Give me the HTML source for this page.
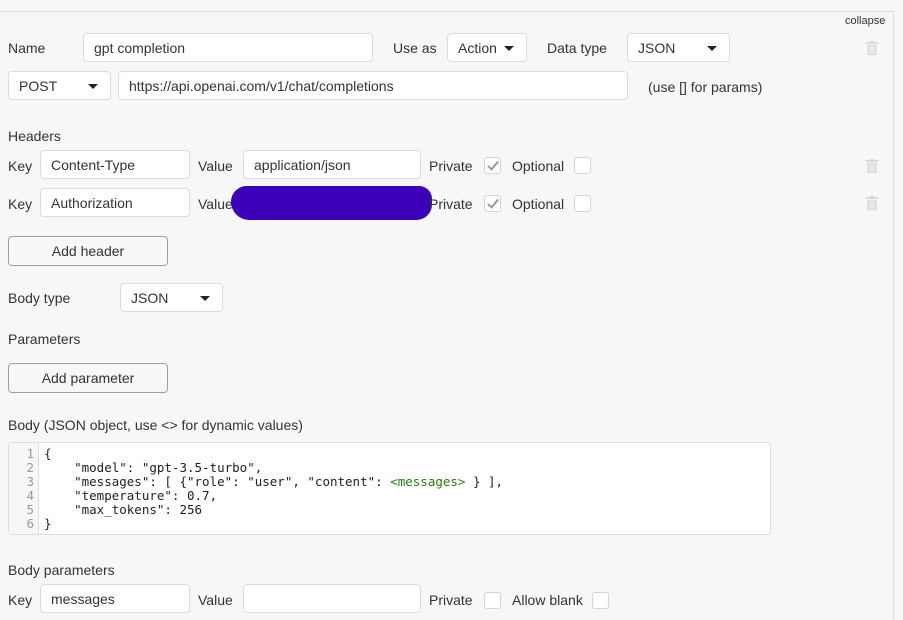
<!DOCTYPE html>
<html><head><meta charset="utf-8"><style>
*{box-sizing:border-box;margin:0;padding:0}
body{width:903px;height:620px;background:#f7f7f7;font-family:"Liberation Sans",sans-serif;font-size:14px;color:#333;position:relative;overflow:hidden}
.a{position:absolute}
.l{position:absolute;line-height:18px}
.in{position:absolute;background:#fff;border:1px solid #dcdcdc;border-radius:4px;height:29px;line-height:29px;padding-left:10px;color:#333}
.dd::after{content:"";position:absolute;right:12px;top:12px;border-left:5px solid transparent;border-right:5px solid transparent;border-top:5px solid #222}
.cb{position:absolute;width:17px;height:17px;background:#fff;border:1px solid #d4d4d4;border-radius:3px}
.ck::after{content:"";position:absolute;left:5px;top:1px;width:4px;height:9px;border:solid #9a9a9a;border-width:0 2.5px 2.5px 0;transform:rotate(40deg)}
.btn{position:absolute;border:1px solid #a0a0a0;border-radius:4px;height:30px;width:160px;text-align:center;line-height:28px;color:#333}
.tr{position:absolute;width:12px;height:14px}
.code{position:absolute;left:8px;top:442px;width:763px;height:93px;background:#fff;border:1px solid #dcdcdc;border-radius:4px;font-family:"DejaVu Sans Mono","Liberation Mono",monospace;font-size:12.5px;line-height:14px}
.gut{position:absolute;left:0;top:0;width:30px;height:91px;background:#f7f7f7;border-right:1px solid #ddd;color:#999;text-align:right;padding:4px 4px 0 0}
.txt{position:absolute;left:35px;top:4px;white-space:pre;color:#222}
</style></head><body>
<div class="a" style="left:0;top:11px;width:894px;height:1px;background:#ddd"></div>
<div class="a" style="left:893px;top:11px;width:1px;height:609px;background:#ddd"></div>
<div class="l" style="left:845px;top:12px;font-size:11px">collapse</div>

<svg class="tr" style="left:866px;top:41px" viewBox="0 0 12 14"><rect x="0" y="1" width="12" height="2" fill="#d8d8d8"/><rect x="4" y="0" width="4" height="2" fill="#d8d8d8"/><rect x="1.5" y="4" width="9" height="10" fill="#d8d8d8"/><path d="M4 5v8M6 5v8M8 5v8" stroke="#fff" stroke-width="0.8"/></svg>
<svg class="tr" style="left:866px;top:159px" viewBox="0 0 12 14"><rect x="0" y="1" width="12" height="2" fill="#d8d8d8"/><rect x="4" y="0" width="4" height="2" fill="#d8d8d8"/><rect x="1.5" y="4" width="9" height="10" fill="#d8d8d8"/><path d="M4 5v8M6 5v8M8 5v8" stroke="#fff" stroke-width="0.8"/></svg>
<svg class="tr" style="left:866px;top:196px" viewBox="0 0 12 14"><rect x="0" y="1" width="12" height="2" fill="#d8d8d8"/><rect x="4" y="0" width="4" height="2" fill="#d8d8d8"/><rect x="1.5" y="4" width="9" height="10" fill="#d8d8d8"/><path d="M4 5v8M6 5v8M8 5v8" stroke="#fff" stroke-width="0.8"/></svg>

<div class="l" style="left:8px;top:39px">Name</div>
<div class="in" style="left:83px;top:33px;width:290px">gpt completion</div>
<div class="l" style="left:393px;top:39px">Use as</div>
<div class="in dd" style="left:447px;top:33px;width:80px">Action</div>
<div class="l" style="left:547px;top:39px">Data type</div>
<div class="in dd" style="left:627px;top:33px;width:103px">JSON</div>

<div class="in dd" style="left:8px;top:71px;width:103px">POST</div>
<div class="in" style="left:118px;top:71px;width:510px">https://api.openai.com/v1/chat/completions</div>
<div class="l" style="left:648px;top:78px">(use [] for params)</div>

<div class="l" style="left:8px;top:127px">Headers</div>
<div class="l" style="left:8px;top:157px">Key</div>
<div class="in" style="left:40px;top:150px;width:150px">Content-Type</div>
<div class="l" style="left:198px;top:157px">Value</div>
<div class="in" style="left:243px;top:150px;width:178px">application/json</div>
<div class="l" style="left:429px;top:157px">Private</div>
<div class="cb ck" style="left:484px;top:157px"></div>
<div class="l" style="left:512px;top:157px">Optional</div>
<div class="cb" style="left:574px;top:157px"></div>

<div class="l" style="left:8px;top:195px">Key</div>
<div class="in" style="left:40px;top:188px;width:150px">Authorization</div>
<div class="l" style="left:198px;top:195px">Value</div>
<div class="in" style="left:243px;top:188px;width:178px"></div>
<div class="a" style="left:231px;top:186px;width:201px;height:34px;background:#3b00b8;border-radius:17px 14px 17px 20px"></div>
<div class="l" style="left:429px;top:195px">Private</div>
<div class="cb ck" style="left:484px;top:195px"></div>
<div class="l" style="left:512px;top:195px">Optional</div>
<div class="cb" style="left:574px;top:195px"></div>

<div class="btn" style="left:8px;top:236px">Add header</div>
<div class="l" style="left:8px;top:289px">Body type</div>
<div class="in dd" style="left:120px;top:283px;width:103px">JSON</div>
<div class="l" style="left:8px;top:330px">Parameters</div>
<div class="btn" style="left:8px;top:363px">Add parameter</div>
<div class="l" style="left:8px;top:416px">Body (JSON object, use &lt;&gt; for dynamic values)</div>

<div class="code"><div class="gut">1<br>2<br>3<br>4<br>5<br>6</div><div class="txt">{
    "model": "gpt-3.5-turbo",
    "messages": [ {"role": "user", "content": <span style="color:#2a7a12">&lt;messages&gt;</span> } ],
    "temperature": 0.7,
    "max_tokens": 256
}</div></div>

<div class="l" style="left:8px;top:561px">Body parameters</div>
<div class="l" style="left:8px;top:591px">Key</div>
<div class="in" style="left:40px;top:584px;width:150px">messages</div>
<div class="l" style="left:198px;top:591px">Value</div>
<div class="in" style="left:243px;top:584px;width:178px"></div>
<div class="l" style="left:429px;top:591px">Private</div>
<div class="cb" style="left:484px;top:592px"></div>
<div class="l" style="left:512px;top:591px">Allow blank</div>
<div class="cb" style="left:592px;top:592px"></div>
</body></html>
